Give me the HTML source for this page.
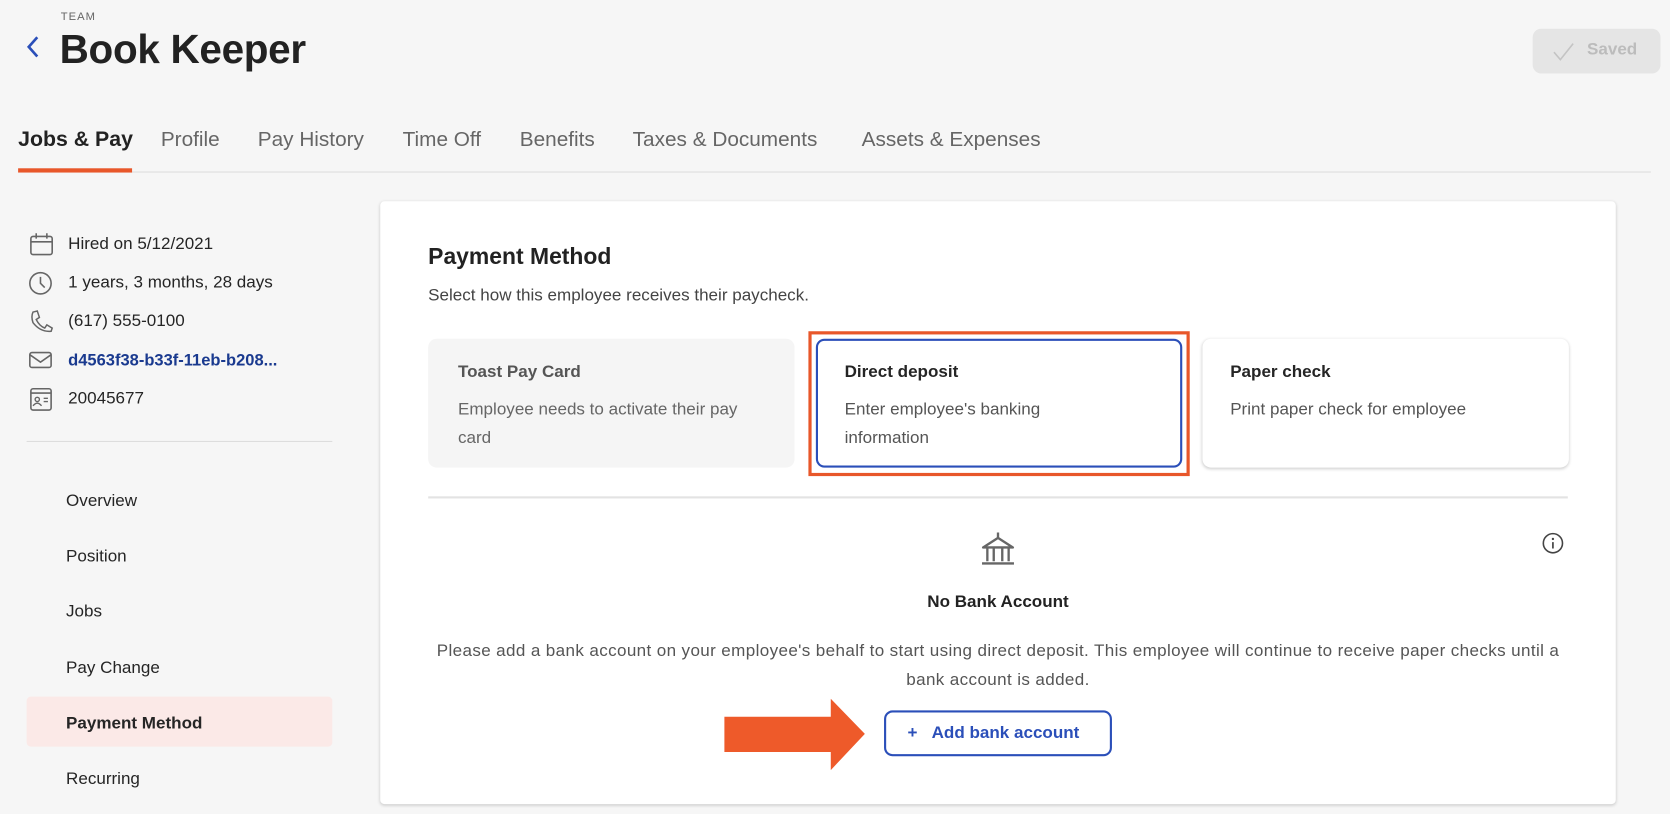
<!DOCTYPE html>
<html><head><meta charset="utf-8"><style>
html,body{margin:0;padding:0;width:1670px;height:814px;overflow:hidden;background:#f6f6f6;font-family:"Liberation Sans",sans-serif;}
#w{position:absolute;left:0;top:0;width:1568px;height:764px;transform:scale(1.0651);transform-origin:0 0;}
.a{position:absolute;white-space:nowrap;}
.t{font-size:19.5px;color:#666;top:120px;}
.i{font-size:16px;color:#252525;left:64px;}
.n{font-size:16px;color:#252525;left:62px;}
.ic{position:absolute;left:27px;}
.oc{position:absolute;top:318px;width:344px;height:121px;box-sizing:border-box;border-radius:8px;}
.ot{position:absolute;left:28px;top:23px;font-size:16px;font-weight:bold;color:#252525;}
.od{position:absolute;left:28px;top:53px;font-size:16px;line-height:27px;color:#555;white-space:nowrap;}
</style></head><body><div id="w">
<div class="a" style="left:57px;top:10px;font-size:10.5px;letter-spacing:1px;color:#666">TEAM</div>
<svg class="a" style="left:23px;top:33px" width="16" height="22" viewBox="0 0 16 22"><path d="M12 2 L4 11 L12 20" fill="none" stroke="#2b4fb9" stroke-width="2.5"/></svg>
<div class="a" style="left:56px;top:26px;font-size:38px;font-weight:bold;color:#222;letter-spacing:-0.3px">Book Keeper</div>
<div class="a" style="left:1439px;top:27px;width:120px;height:42px;background:#e5e5e5;border-radius:8px"></div>
<svg class="a" style="left:1457px;top:38px" width="22" height="20"><path d="M2 11 L8 18 L20 3" fill="none" stroke="#c4c4c4" stroke-width="1.5"/></svg>
<div class="a" style="left:1490px;top:38px;font-size:16px;font-weight:bold;color:#bcbcbc">Saved</div>

<div class="a t" style="left:17px;color:#222;font-weight:bold;font-size:20px">Jobs &amp; Pay</div>
<div class="a t" style="left:151px">Profile</div>
<div class="a t" style="left:242px">Pay History</div>
<div class="a t" style="left:378px">Time Off</div>
<div class="a t" style="left:488px">Benefits</div>
<div class="a t" style="left:594px">Taxes &amp; Documents</div>
<div class="a t" style="left:809px">Assets &amp; Expenses</div>
<div class="a" style="left:17px;top:161px;width:1533px;height:1px;background:#ddd"></div>
<div class="a" style="left:17px;top:158px;width:107px;height:4px;background:#e8572a"></div>

<svg class="ic" style="top:218px" width="24" height="22" viewBox="0 0 24 22"><rect x="2" y="4" width="20" height="17" rx="2" fill="none" stroke="#666" stroke-width="1.5"/><path d="M2 9H22M7 1V6M17 1V6" stroke="#666" stroke-width="1.5"/></svg>
<div class="a i" style="top:221px">Hired on 5/12/2021</div>
<svg class="ic" style="top:254px" width="24" height="24"><circle cx="11" cy="12" r="10" fill="none" stroke="#666" stroke-width="1.5"/><path d="M11 6V12L15 16" fill="none" stroke="#666" stroke-width="1.5"/></svg>
<div class="a i" style="top:257px">1 years, 3 months, 28 days</div>
<svg class="ic" style="top:290px" width="24" height="24"><path d="M4 3 L8 2 L10 8 L7 10 Q10 16 15 18 L17 15 L22 18 L21 21 Q11 22 4 13 Q2 7 4 3Z" fill="none" stroke="#666" stroke-width="1.4"/></svg>
<div class="a i" style="top:293px">(617) 555-0100</div>
<svg class="ic" style="top:328px" width="24" height="20"><rect x="1" y="3" width="20" height="14" rx="2" fill="none" stroke="#666" stroke-width="1.5"/><path d="M1 5L11 12L21 5" fill="none" stroke="#666" stroke-width="1.5"/></svg>
<div class="a i" style="top:330px;color:#1a3a8f;font-weight:bold;font-size:15.5px">d4563f38-b33f-11eb-b208...</div>
<svg class="ic" style="top:363px" width="24" height="24"><rect x="2" y="2" width="19" height="20" rx="2" fill="none" stroke="#666" stroke-width="1.5"/><path d="M2 6H21" stroke="#666" stroke-width="1.5"/><circle cx="8" cy="12" r="2" fill="none" stroke="#666" stroke-width="1.3"/><path d="M4 18Q8 13 12 18M14 11H18M14 14H18" fill="none" stroke="#666" stroke-width="1.3"/></svg>
<div class="a i" style="top:366px">20045677</div>
<div class="a" style="left:25px;top:414px;width:287px;height:1px;background:#ddd"></div>

<div class="a n" style="top:462px">Overview</div>
<div class="a n" style="top:514px">Position</div>
<div class="a n" style="top:566px">Jobs</div>
<div class="a n" style="top:619px">Pay Change</div>
<div class="a" style="left:25px;top:654px;width:287px;height:47px;background:#fbe9e7;border-radius:4px"></div>
<div class="a n" style="top:671px;font-weight:bold">Payment Method</div>
<div class="a n" style="top:723px">Recurring</div>

<div class="a" style="left:357px;top:189px;width:1160px;height:566px;background:#fff;border-radius:4px;box-shadow:0 1px 3px rgba(0,0,0,0.18)"></div>
<div class="a" style="left:402px;top:229px;font-size:21.5px;font-weight:bold;color:#222">Payment Method</div>
<div class="a" style="left:402px;top:269px;font-size:16px;color:#444">Select how this employee receives their paycheck.</div>

<div class="oc" style="left:402px;background:#f5f5f5"><div class="ot" style="color:#555">Toast Pay Card</div><div class="od" style="color:#666">Employee needs to activate their pay<br>card</div></div>
<div class="a" style="left:759px;top:311px;width:352px;height:130px;border:3px solid #e8572a"></div>
<div class="oc" style="left:766px;border:2px solid #2b4fb9;background:#fff"><div class="ot" style="left:25px;top:21px">Direct deposit</div><div class="od" style="left:25px;top:51px">Enter employee's banking<br>information</div></div>
<div class="oc" style="left:1129px;background:#fff;box-shadow:0 1px 3px rgba(0,0,0,0.2)"><div class="ot" style="left:26px">Paper check</div><div class="od" style="left:26px">Print paper check for employee</div></div>

<div class="a" style="left:402px;top:466px;width:1070px;height:2px;background:#e3e3e3"></div>
<svg class="a" style="left:920px;top:498px" width="34" height="34" viewBox="0 0 34 34"><path d="M17 2V7M3 16L17 7L31 16Z M3 16H31" fill="none" stroke="#666" stroke-width="2.2" stroke-linejoin="round"/><path d="M7 17V29M13 17V29M21 17V29M27 17V29M2 31H32" stroke="#666" stroke-width="2.2"/></svg>
<svg class="a" style="left:1447px;top:499px" width="22" height="22"><circle cx="11" cy="11" r="9" fill="none" stroke="#444" stroke-width="1.5"/><circle cx="11" cy="7" r="1.1" fill="#444"/><path d="M11 10V16" stroke="#444" stroke-width="1.6"/></svg>
<div class="a" style="left:737px;width:400px;text-align:center;top:557px;font-size:16px;font-weight:bold;color:#222">No Bank Account</div>
<div class="a" style="left:362px;width:1150px;text-align:center;top:598px;font-size:16px;letter-spacing:0.35px;line-height:27px;color:#555">Please add a bank account on your employee's behalf to start using direct deposit. This employee will continue to receive paper checks until a<br>bank account is added.</div>
<div class="a" style="left:830px;top:667px;width:214px;height:43px;box-sizing:border-box;border:2px solid #2b4fb9;border-radius:8px"></div>
<div class="a" style="left:852px;top:680px;font-size:16px;font-weight:bold;color:#2b4fb9">+&nbsp;&nbsp;&nbsp;Add bank account</div>
<svg class="a" style="left:680px;top:656px" width="134" height="68"><path d="M0 17H100V0L132 33L100 67V50H0Z" fill="#ee5a2a"/></svg>
</div></body></html>
